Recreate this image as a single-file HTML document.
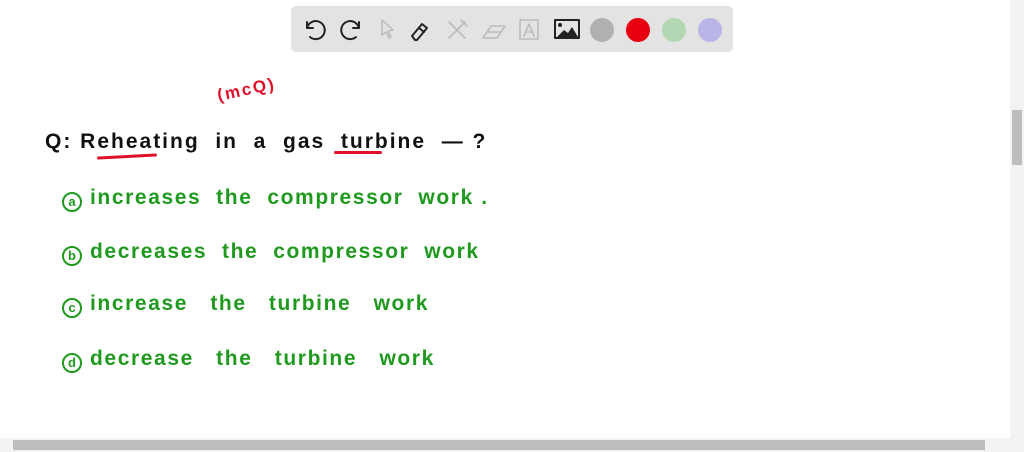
<!DOCTYPE html>
<html><head><style>
body{margin:0;width:1024px;height:452px;background:#fff;position:relative;overflow:hidden;font-family:"Liberation Sans",sans-serif}
.t{position:absolute;white-space:nowrap;font-family:"Liberation Sans",sans-serif;font-size:21px;letter-spacing:2px;font-weight:bold}
.g{color:#1f9a1f;letter-spacing:1.6px}
.k{color:#111}
.r{color:#e0102a}
.tb{position:absolute;left:291px;top:6px;width:442px;height:46px;background:#e3e3e3;border-radius:5px}
.c{position:absolute;top:18px;width:24px;height:24px;border-radius:50%}
.m{display:inline-block;width:20px;height:20px;border:2.5px solid #1f9a1f;border-radius:50%;font-size:13px;line-height:16px;text-align:center;letter-spacing:0;vertical-align:-2px;box-sizing:border-box;margin-right:8px}
</style></head><body>
<div class="tb"></div>
<svg style="position:absolute;left:291px;top:6px" width="442" height="46" fill="none" stroke-width="2" stroke-linecap="round" stroke-linejoin="round">
<g stroke="#222"><path d="M16 16 v6 h6"/><path d="M16 22 a9 9 0 1 1 3 9"/><path d="M68 16 v6 h-6"/><path d="M68 22 a9 9 0 1 0 -3 9"/></g>
<path d="M91 14 l11 10 -5 1 3 6 -2 1 -3 -6 -4 3 z" stroke="#bbb" stroke-width="1.5"/>
<path d="M124 34 l-3 -4 10 -12 5 4 -10 12 z M128 22 l5 4" stroke="#222"/>
<g stroke="#bbb" stroke-width="1.6"><path d="M158 16 l16 16 M174 16 l-16 16 M170 14 l6 6"/><path d="M192 32 l8 -12 h14 l-8 12 z M196 26 h13"/><rect x="229" y="14" width="18" height="19"/><path d="M233 30 l5 -12 5 12 M235 26 h6"/></g>
<rect x="264" y="14" width="24" height="18" stroke="#222"/><circle cx="269" cy="19" r="2" fill="#222" stroke="none"/><path d="M266 31 l7 -7 4 3 4 -6 6 10 z" fill="#222" stroke="none"/>
</svg>
<div class="c" style="left:590px;background:#b0b0b0"></div>
<div class="c" style="left:626px;background:#e8000f"></div>
<div class="c" style="left:662px;background:#b3d7b3"></div>
<div class="c" style="left:698px;background:#b9b5e6"></div>

<div class="t r" style="left:217px;top:80px;font-size:17px;transform:rotate(-12deg)">(mcQ)</div>
<div class="t k" style="left:45px;top:130px">Q: Reheating&nbsp; in&nbsp; a&nbsp; gas&nbsp; turbine&nbsp; — ?</div>
<div style="position:absolute;left:97px;top:155px;width:60px;height:3px;background:#e0102a;border-radius:2px;transform:rotate(-3deg)"></div>
<div style="position:absolute;left:334px;top:151px;width:48px;height:3px;background:#e0102a;border-radius:2px"></div>
<div class="t g" style="left:62px;top:186px"><span class="m">a</span>increases&nbsp; the&nbsp; compressor&nbsp; work .</div>
<div class="t g" style="left:62px;top:240px"><span class="m">b</span>decreases&nbsp; the&nbsp; compressor&nbsp; work</div>
<div class="t g" style="left:62px;top:292px"><span class="m">c</span>increase&nbsp;&nbsp; the&nbsp;&nbsp; turbine&nbsp;&nbsp; work</div>
<div class="t g" style="left:62px;top:347px"><span class="m">d</span>decrease&nbsp;&nbsp; the&nbsp;&nbsp; turbine&nbsp;&nbsp; work</div>

<div style="position:absolute;left:1010px;top:0;width:14px;height:438px;background:#f3f3f3"></div>
<div style="position:absolute;left:1012px;top:110px;width:10px;height:55px;background:#bdbdbd"></div>
<div style="position:absolute;left:0;top:438px;width:1024px;height:14px;background:#f3f3f3"></div>
<div style="position:absolute;left:13px;top:440px;width:972px;height:10px;background:#bdbdbd"></div>
</body></html>
